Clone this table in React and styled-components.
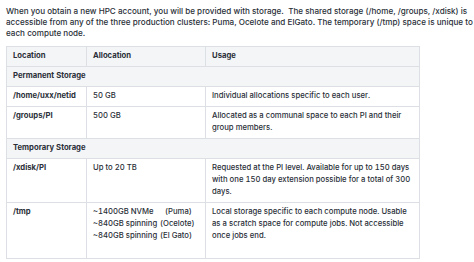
import React from "react";
import styled, { createGlobalStyle } from "styled-components";

const Global = createGlobalStyle`
  html, body { margin: 0; padding: 0; background: #fff; }
  body { font-family: Inter, "Noto Sans", sans-serif; color: #2a2f38; }
`;

const Page = styled.div`
  padding: 6px 6px 0 6px;
`;

const Intro = styled.p`
  margin: 0 0 7px 0;
  font-size: 8.1px;
  line-height: 11px;
  font-weight: 500;
  white-space: nowrap;
`;

const Table = styled.table`
  border-collapse: collapse;
  table-layout: fixed;
  width: 414px;
  font-size: 7.7px;
  line-height: 12px;
`;

const Cell = styled.td`
  border: 1px solid #dcdfe4;
  padding: 3px 6px 4px 6px;
  vertical-align: top;
  text-align: left;
  font-weight: ${(p) => (p.$bold ? 700 : 500)};
  background: ${(p) => (p.$shaded ? "#f4f5f7" : "#fff")};
  white-space: nowrap;
  font-variant-numeric: tabular-nums;
`;

const Head = styled(Cell).attrs({ as: "th" })`
  font-weight: 700;
  background: #f4f5f7;
`;

const AllocLine = styled.div`
  display: flex;
`;

const Amount = styled.span`
  display: inline-block;
  width: ${(p) => p.$w}px;
`;

const Lines = ({ items }) =>
  items.map((t, i) => (
    <React.Fragment key={i}>
      {i > 0 && <br />}
      {t}
    </React.Fragment>
  ));

const rows = [
  { section: "Permanent Storage" },
  { loc: "/home/uxx/netid", alloc: ["50 GB"], usage: ["Individual allocations specific to each user."] },
  { loc: "/groups/PI", alloc: ["500 GB"], usage: ["Allocated as a communal space to each PI and their", "group members."] },
  { section: "Temporary Storage" },
  {
    loc: "/xdisk/PI",
    alloc: ["Up to 20 TB"],
    usage: ["Requested at the PI level. Available for up to 150 days", "with one 150 day extension possible for a total of 300", "days."],
  },
  {
    loc: "/tmp",
    split: [
      ["~1400GB NVMe", "(Puma)", 72],
      ["~840GB spinning", "(Ocelote)", 67],
      ["~840GB spinning", "(El Gato)", 67],
    ],
    usage: ["Local storage specific to each compute node. Usable", "as a scratch space for compute jobs. Not accessible", "once jobs end.", "\u00a0"],
  },
];

export default function App() {
  return (
    <>
      <Global />
      <Page>
        <Intro>
          When you obtain a new HPC account, you will be provided with storage.{"\u00a0"} The shared storage (/home, /groups, /xdisk) is
          <br />
          accessible from any of the three production clusters: Puma, Ocelote and ElGato. The temporary (/tmp) space is unique to
          <br />
          each compute node.
        </Intro>
        <Table>
          <colgroup>
            <col style={{ width: 80 }} />
            <col style={{ width: 119 }} />
            <col style={{ width: 214 }} />
          </colgroup>
          <thead>
            <tr>
              <Head>Location</Head>
              <Head>Allocation</Head>
              <Head>Usage</Head>
            </tr>
          </thead>
          <tbody>
            {rows.map((r, i) =>
              r.section ? (
                <tr key={i}>
                  <Cell colSpan={3} $bold $shaded>{r.section}</Cell>
                </tr>
              ) : (
                <tr key={i}>
                  <Cell $bold>{r.loc}</Cell>
                  <Cell>
                    {r.split ? (
                      r.split.map(([a, s, w]) => (
                        <AllocLine key={a + s}>
                          <Amount $w={w}>{a}</Amount>
                          <span>{s}</span>
                        </AllocLine>
                      ))
                    ) : (
                      <Lines items={r.alloc} />
                    )}
                  </Cell>
                  <Cell>
                    <Lines items={r.usage} />
                  </Cell>
                </tr>
              )
            )}
          </tbody>
        </Table>
      </Page>
    </>
  );
}
